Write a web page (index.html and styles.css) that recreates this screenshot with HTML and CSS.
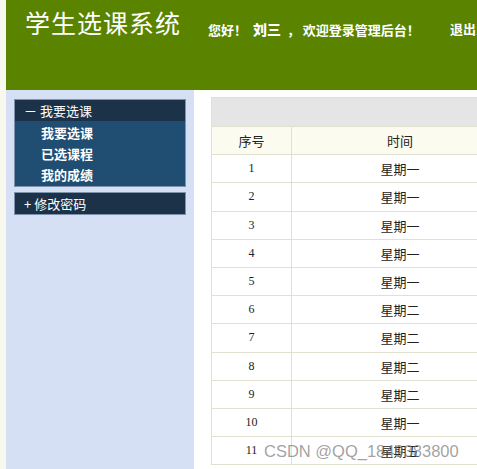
FILE: index.html
```html
<!DOCTYPE html>
<html lang="zh-CN">
<head>
  <meta charset="UTF-8">
  <title>学生选课系统</title>
  <link rel="stylesheet" href="styles.css">
</head>
<body>
  <div class="page">
    <header>
      <h1>学生选课系统</h1>
      <div class="welcome">您好！ <b>刘三</b> ， 欢迎登录管理后台！</div>
      <a class="logout" href="#">退出系统</a>
    </header>

    <div class="main">
      <div class="sidebar">
        <div class="menu">
          <div class="menu-title">－ 我要选课</div>
          <ul>
            <li>我要选课</li>
            <li>已选课程</li>
            <li>我的成绩</li>
          </ul>
        </div>
        <div class="menu">
          <div class="menu-title">+ 修改密码</div>
        </div>
      </div>

      <div class="content">
        <table class="course-table">
          <thead>
            <tr><th class="bar" colspan="2"></th></tr>
            <tr><th class="num">序号</th><th>时间</th></tr>
          </thead>
          <tbody>
            <tr><td>1</td><td>星期一</td></tr>
            <tr><td>2</td><td>星期一</td></tr>
            <tr><td>3</td><td>星期一</td></tr>
            <tr><td>4</td><td>星期一</td></tr>
            <tr><td>5</td><td>星期一</td></tr>
            <tr><td>6</td><td>星期二</td></tr>
            <tr><td>7</td><td>星期二</td></tr>
            <tr><td>8</td><td>星期二</td></tr>
            <tr><td>9</td><td>星期二</td></tr>
            <tr><td>10</td><td>星期一</td></tr>
            <tr><td>11</td><td>星期五</td></tr>
          </tbody>
        </table>
      </div>
    </div>
  </div>
  <div class="watermark">CSDN @QQ_1849383800</div>
</body>
</html>
```

FILE: styles.css
```css
body {
  margin: 0;
  background-color: #f8f8ef;
  font-family: "Liberation Serif", "Noto Sans CJK SC", serif;
  font-size: 12px;
  overflow: hidden;
  height: 469px;
}
.page { margin-left: 6px; }

header {
  background-color: #5a8400;
  height: 90px;
  display: flex;
  align-items: flex-start;
  padding-left: 19px;
  color: #fff;
  white-space: nowrap;
  overflow: hidden;
}
header h1 {
  margin: 6px 27px 0 0;
  font-family: "Noto Sans CJK SC", sans-serif;
  font-size: 25px;
  font-weight: normal;
  line-height: 32px;
  letter-spacing: 1px;
}
.welcome {
  margin-top: 19px;
  font-family: "Noto Sans CJK SC", sans-serif;
  font-size: 13px;
  font-weight: bold;
}
.welcome b { font-size: 14px; margin: 0 3px; }
.logout {
  margin: 19px 0 0 30px;
  color: #fff;
  text-decoration: none;
  font-family: "Noto Sans CJK SC", sans-serif;
  font-size: 13px;
  font-weight: bold;
}

.main { display: flex; height: 379px; }

.sidebar {
  width: 172px;
  flex-shrink: 0;
  background-color: #d5e0f5;
  padding: 9px 8px;
}
.menu {
  border: 1px solid #7d93ad;
  margin-bottom: 5px;
  font-family: "Noto Sans CJK SC", sans-serif;
  font-size: 13px;
  color: #fff;
}
.menu-title {
  background-color: #1c3248;
  height: 21px;
  line-height: 21px;
  padding-left: 9px;
}
.menu ul {
  list-style: none;
  margin: 0;
  padding: 1px 0;
  background-color: #1f4e72;
}
.menu li {
  height: 21px;
  line-height: 21px;
  padding-left: 26px;
  font-weight: bold;
}

.content {
  flex: 1;
  background-color: #fff;
  padding: 7px 0 0 17px;
  overflow: hidden;
}
.course-table {
  border-collapse: collapse;
  width: 298px;
  border: 1px solid #dcdccb;
}
.course-table th, .course-table td {
  border: 1px solid #e2e1cf;
  text-align: center;
  font-weight: normal;
  color: #222;
  height: 27.2px;
  padding: 0;
}
.course-table th.bar {
  background-color: #e5e5e5;
  height: 28px;
}
.course-table th {
  background-color: #fbfbf0;
  font-family: "Noto Sans CJK SC", sans-serif;
  font-size: 13px;
}
.course-table th.num { width: 79px; }
.course-table td:nth-child(2) {
  font-family: "Noto Sans CJK SC", sans-serif;
  font-size: 13px;
}

.watermark {
  position: absolute;
  left: 264px;
  top: 442px;
  font-family: "Liberation Sans", sans-serif;
  font-size: 16.5px;
  color: rgba(120, 120, 120, 0.7);
  pointer-events: none;
}
```
